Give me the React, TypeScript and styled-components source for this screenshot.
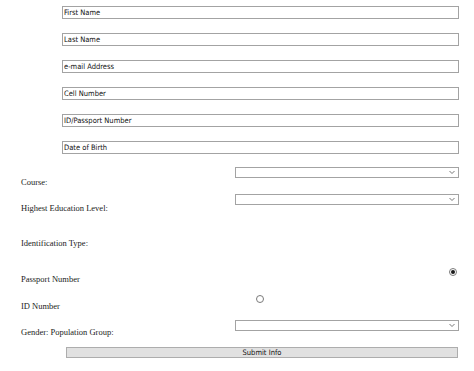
import React from "react";
import styled, { createGlobalStyle } from "styled-components";

const Global = createGlobalStyle`
  html, body { margin: 0; padding: 0; background: #ffffff; }
  body { width: 474px; height: 371px; overflow: hidden; }
  * { box-sizing: border-box; }
`;

const Page = styled.form`
  display: flex;
  flex-direction: column;
  width: 474px;
`;

const InputsBlock = styled.div`
  display: flex;
  flex-direction: column;
  gap: 14px;
  padding: 6px 0 9px 62px;
`;

const TextField = styled.input`
  width: 397px;
  height: 13px;
  margin: 0;
  padding: 0 1px;
  border: 1px solid #a3a3a3;
  border-radius: 0;
  background: #ffffff;
  font-family: "DejaVu Sans Condensed", "DejaVu Sans", sans-serif;
  font-size: 7.5px;
  color: #111111;
  line-height: 11px;
  outline: none;
`;

const Row = styled.div<{ $h: number }>`
  display: grid;
  grid-template-columns: 214px 224px;
  padding-left: 21px;
  height: ${(p) => p.$h}px;
  align-items: start;
`;

const Label = styled.label<{ $top: number }>`
  margin-top: ${(p) => p.$top}px;
  font-family: "Liberation Serif", "Times New Roman", serif;
  font-size: 8.5px;
  line-height: 10px;
  color: #222222;
  white-space: nowrap;
`;

const SelectWrap = styled.div<{ $top: number }>`
  position: relative;
  margin-top: ${(p) => p.$top}px;
  width: 224px;
  height: 11px;
`;

const Select = styled.select`
  appearance: none;
  width: 224px;
  height: 11px;
  margin: 0;
  padding: 0;
  border: 1px solid #a3a3a3;
  border-radius: 0;
  background: #ffffff;
  font-size: 7px;
  outline: none;
  display: block;
`;

const Chevron = styled.svg`
  position: absolute;
  right: 4px;
  top: 3px;
  width: 6px;
  height: 5px;
  pointer-events: none;
`;

const Radio = styled.input<{ $top: number; $left?: number; $end?: boolean }>`
  appearance: none;
  margin: ${(p) => p.$top}px ${(p) => (p.$end ? 2 : 0)}px 0 ${(p) => p.$left ?? 0}px;
  justify-self: ${(p) => (p.$end ? "end" : "start")};
  width: 8px;
  height: 8px;
  border: 1px solid #7a7a7a;
  border-radius: 50%;
  background: #ffffff;
  display: grid;
  place-items: center;
  &:checked::after {
    content: "";
    width: 4px;
    height: 4px;
    border-radius: 50%;
    background: #1a1a1a;
  }
`;

const SubmitButton = styled.button`
  margin: 4px 0 0 66px;
  width: 392px;
  height: 11px;
  padding: 0;
  border: 1px solid #adadad;
  border-radius: 0;
  background: #e1e1e1;
  font-family: "DejaVu Sans Condensed", "DejaVu Sans", sans-serif;
  font-size: 7.5px;
  line-height: 9px;
  color: #111111;
`;

const textFields = [
  "First Name",
  "Last Name",
  "e-mail Address",
  "Cell Number",
  "ID/Passport Number",
  "Date of Birth",
];

function DropDown({ top }: { top: number }) {
  return (
    <SelectWrap $top={top}>
      <Select defaultValue="">
        <option value=""></option>
      </Select>
      <Chevron viewBox="0 0 6 5">
        <path d="M0.5 1 L3 3.5 L5.5 1" fill="none" stroke="#555" strokeWidth="0.8" />
      </Chevron>
    </SelectWrap>
  );
}

export default function App() {
  return (
    <>
      <Global />
      <Page onSubmit={(e) => e.preventDefault()}>
        <InputsBlock>
          {textFields.map((t) => (
            <TextField key={t} type="text" defaultValue={t} />
          ))}
        </InputsBlock>
        <Row $h={27}>
          <Label $top={14}>Course:</Label>
          <DropDown top={4} />
        </Row>
        <Row $h={24}>
          <Label $top={13}>Highest Education Level:</Label>
          <DropDown top={4} />
        </Row>
        <Row $h={38}>
          <Label $top={24}>Identification Type:</Label>
          <div />
        </Row>
        <Row $h={34}>
          <Label $top={22}>Passport Number</Label>
          <Radio type="radio" name="idtype" defaultChecked $top={16} $end />
        </Row>
        <Row $h={30}>
          <Label $top={15}>ID Number</Label>
          <Radio type="radio" name="idtype" $top={9} $left={21} />
        </Row>
        <Row $h={27}>
          <Label $top={11}>Gender: Population Group:</Label>
          <DropDown top={4} />
        </Row>
        <SubmitButton type="submit">Submit Info</SubmitButton>
      </Page>
    </>
  );
}
